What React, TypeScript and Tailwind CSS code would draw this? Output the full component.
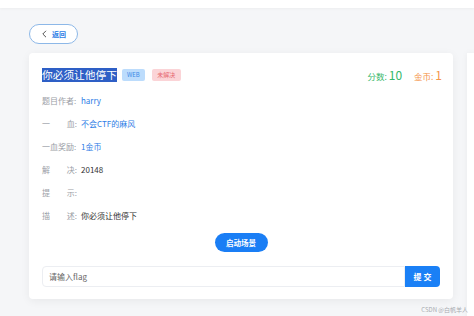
import React from "react";

const font = { fontFamily: '"Noto Sans CJK SC", "Noto Sans", sans-serif' };

function Row({ label, value, blue }: { label: React.ReactNode; value: string; blue?: boolean }) {
  return (
    <div className="flex items-center h-[23px] text-[8px] leading-none whitespace-nowrap">
      <div className="w-[39px] shrink-0 text-[#9a9ea6] flex justify-between pr-[4px]">{label}</div>
      <div className={blue ? "text-[#2f7ee6]" : "text-[#333]"}>{value}</div>
    </div>
  );
}

function Spread({ a, b }: { a: string; b: string }) {
  return (
    <>
      <span>{a}</span>
      <span>{b}:</span>
    </>
  );
}

export default function App() {
  return (
    <div className="w-[474px] h-[316px] bg-[#f5f6f8] relative overflow-hidden" style={font}>
      <div className="h-[8px] bg-white shadow-[0_1px_3px_rgba(0,0,0,0.04)]" />
      <div className="flex">
        <div className="ml-[29px] w-[424px]">
          <div className="h-[16px]" />
          <button className="h-[20px] w-[49px] rounded-full border border-[#8db8e8] bg-white flex items-center justify-center gap-[4px] text-[#2f7ee6]">
            <svg width="7" height="8" viewBox="0 0 7 8"><path d="M5 0.8 L1.8 4 L5 7.2" fill="none" stroke="#555" strokeWidth="1" /></svg>
            <span className="text-[7px] font-bold leading-none">返回</span>
          </button>
          <div className="h-[9px]" />
          <div className="bg-white rounded-[4px] h-[246px] shadow-[0_2px_10px_rgba(0,0,0,0.06)] px-[13px] pt-[14px]">
            <div className="flex items-center h-[16px] whitespace-nowrap">
              <span className="text-[10.7px] leading-[14px] bg-[#2e5fc6] text-white">你必须让他停下</span>
              <span className="ml-[5px] h-[12px] w-[23px] text-center bg-[#bcdcfc] text-[#3d8ae6] text-[6px] leading-[12px] rounded-[2px]">WEB</span>
              <span className="ml-[7px] h-[12px] w-[29px] text-center bg-[#fbd4d7] text-[#e76a72] text-[6px] leading-[12px] rounded-[2px]">未解决</span>
              <div className="flex-1" />
              <span className="text-[#35b86a] text-[8.5px] leading-none">分数: <span className="text-[12px]">10</span></span>
              <span className="ml-[12px] mr-[-2px] text-[#f5964a] text-[8.5px] leading-none">金币: <span className="text-[12px]">1</span></span>
            </div>
            <div className="mt-[6px]">
              <Row label={<span>题目作者:</span>} value="harry" blue />
              <Row label={<Spread a="一" b="血" />} value="不会CTF的麻风" blue />
              <Row label={<span>一血奖励:</span>} value="1金币" blue />
              <Row label={<Spread a="解" b="决" />} value="20148" />
              <Row label={<Spread a="提" b="示" />} value="" />
              <Row label={<Spread a="描" b="述" />} value="你必须让他停下" />
            </div>
            <div className="flex justify-center mt-[6px]">
              <button className="h-[19px] w-[53px] rounded-full bg-[#1a7ef5] text-white text-[7.5px] font-bold leading-none">启动场景</button>
            </div>
            <div className="flex mt-[14px] h-[21px]">
              <div className="flex-1 border border-[#eceef2] rounded-l-[4px] flex items-center px-[6px] text-[8px] text-[#666]">请输入flag</div>
              <button className="w-[35px] bg-[#1a80f6] rounded-r-[4px] text-white text-[8px] font-bold tracking-[2px] pl-[2px]">提交</button>
            </div>
          </div>
        </div>
        <div className="ml-[14px] flex-1 bg-white mt-[45px] h-[300px] shadow-[0_0_6px_rgba(0,0,0,0.05)]" />
      </div>
      <div className="absolute right-[6px] bottom-[3px] text-[6px] text-[#a8abb0] leading-none">CSDN @白帆羊人</div>
    </div>
  );
}
